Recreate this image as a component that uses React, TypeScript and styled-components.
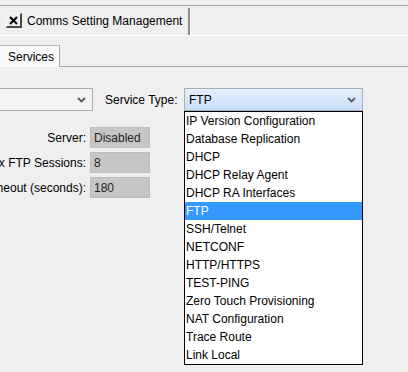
import * as React from 'react';
import styled, { createGlobalStyle } from 'styled-components';

const GlobalStyle = createGlobalStyle`
  html, body {
    margin: 0;
    padding: 0;
    background: #efefef;
  }
`;

const serviceTypes = [
  'IP Version Configuration',
  'Database Replication',
  'DHCP',
  'DHCP Relay Agent',
  'DHCP RA Interfaces',
  'FTP',
  'SSH/Telnet',
  'NETCONF',
  'HTTP/HTTPS',
  'TEST-PING',
  'Zero Touch Provisioning',
  'NAT Configuration',
  'Trace Route',
  'Link Local',
];

const fields = [
  { label: 'Server:', value: 'Disabled' },
  { label: 'Max FTP Sessions:', value: '8' },
  { label: 'Idle Timeout (seconds):', value: '180' },
];

const Chevron: React.FC = () => (
  <svg width="9" height="6" viewBox="0 0 9 6">
    <polyline points="1,1 4.5,4.5 8,1" fill="none" stroke="#5a5a5a" strokeWidth="1.8" />
  </svg>
);

const App: React.FC = () => {
  const selected = 'FTP';

  return (
    <Screen>
      <GlobalStyle />
      <TopRule />
      <TabStrip>
        <DocTab>
          <CloseBox>
            <svg width="9" height="9" viewBox="0 0 9 9">
              <path d="M1 1 L8 8 M8 1 L1 8" stroke="#000" strokeWidth="2" />
            </svg>
          </CloseBox>
          <span>Comms Setting Management</span>
        </DocTab>
        <Separator />
      </TabStrip>

      <SubTabs>
        <SubTab>Services</SubTab>
        <SubTabRule />
      </SubTabs>

      <Form>
        <SelectRow>
          <PlainSelect>
            <Chevron />
          </PlainSelect>
          <Label>Service Type:</Label>
          <TypeWrap>
            <TypeSelect>
              <span>{selected}</span>
              <Chevron />
            </TypeSelect>
            <DropList>
              {serviceTypes.map(t => (
                <Option key={t} active={t === selected}>
                  {t}
                </Option>
              ))}
            </DropList>
          </TypeWrap>
        </SelectRow>

        <Fields>
          {fields.map(f => (
            <FieldRow key={f.label}>
              <FieldLabel>
                <span>{f.label}</span>
              </FieldLabel>
              <ReadOnly>{f.value}</ReadOnly>
            </FieldRow>
          ))}
        </Fields>
      </Form>
    </Screen>
  );
};

const Screen = styled.div`
  position: relative;
  width: 408px;
  height: 372px;
  overflow: hidden;
  background: #efefef;
  font-family: 'Liberation Sans', Arial, sans-serif;
  font-size: 12px;
  color: #000;
`;

const TopRule = styled.div`
  margin-top: 5px;
  height: 0;
  border-top: 1px solid #a3a3a3;
`;

const TabStrip = styled.div`
  display: flex;
  align-items: flex-end;
  height: 29px;
  border-bottom: 1px solid #ffffff;
`;

const DocTab = styled.div`
  display: flex;
  align-items: center;
  gap: 5px;
  height: 29px;
  padding-left: 6px;
  white-space: nowrap;
`;

const CloseBox = styled.div`
  display: flex;
  align-items: center;
  justify-content: center;
  width: 13px;
  height: 12px;
  border-style: solid;
  border-width: 1px 2px 2px 1px;
  border-color: #f8f8f8 #4a4a4a #4a4a4a #f8f8f8;
  background: #efefef;
`;

const Separator = styled.div`
  width: 2px;
  height: 27px;
  margin-left: 6px;
  background: #8c8c8c;
  border-right: 1px solid #ffffff;
`;

const SubTabs = styled.div`
  display: flex;
  align-items: flex-end;
  margin-top: 8px;
  height: 23px;
`;

const SubTab = styled.div`
  display: flex;
  align-items: center;
  width: 51px;
  height: 21px;
  padding-left: 8px;
  background: #fafafa;
  border-top: 1px solid #b4b4b4;
  border-right: 1px solid #a8a8a8;
`;

const SubTabRule = styled.div`
  flex: 1;
  height: 0;
  border-top: 1px solid #a3a3a3;
`;

const Form = styled.div`
  display: flex;
  flex-direction: column;
  padding-top: 21px;
  gap: 16px;
`;

const SelectRow = styled.div`
  display: flex;
  align-items: center;
  height: 23px;
`;

const PlainSelect = styled.div`
  display: flex;
  align-items: center;
  justify-content: flex-end;
  box-sizing: border-box;
  width: 100px;
  height: 23px;
  margin-left: -7px;
  padding-right: 6px;
  border: 1px solid #acacac;
  background: #f3f3f3;
`;

const Label = styled.span`
  margin-left: 12px;
  width: 79px;
  white-space: nowrap;
`;

const TypeWrap = styled.div`
  position: relative;
`;

const TypeSelect = styled.div`
  display: flex;
  align-items: center;
  justify-content: space-between;
  box-sizing: border-box;
  width: 179px;
  height: 23px;
  padding: 0 6px 0 4px;
  border: 1px solid #a6adb7;
  background: linear-gradient(#e4effc, #c9dff8);
`;

const DropList = styled.div`
  position: absolute;
  top: 23px;
  left: 0;
  box-sizing: border-box;
  width: 179px;
  border: 1px solid #000;
  background: #fff;
`;

const Option = styled.div<{ active?: boolean }>`
  height: 18px;
  line-height: 18px;
  padding-left: 1px;
  white-space: nowrap;
  background: ${({ active }) => (active ? '#3399ff' : '#fff')};
  color: ${({ active }) => (active ? '#fff' : '#000')};
`;

const Fields = styled.div`
  display: flex;
  flex-direction: column;
  gap: 4px;
`;

const FieldRow = styled.div`
  display: flex;
  align-items: center;
  gap: 4px;
`;

const FieldLabel = styled.div`
  display: flex;
  justify-content: flex-end;
  width: 86px;
  overflow: hidden;
  white-space: nowrap;
`;

const ReadOnly = styled.div`
  display: flex;
  align-items: center;
  box-sizing: border-box;
  width: 60px;
  height: 21px;
  padding-left: 3px;
  border: 1px solid #bdbdbd;
  background: #c6c6c6;
  color: #222;
`;

export default App;
